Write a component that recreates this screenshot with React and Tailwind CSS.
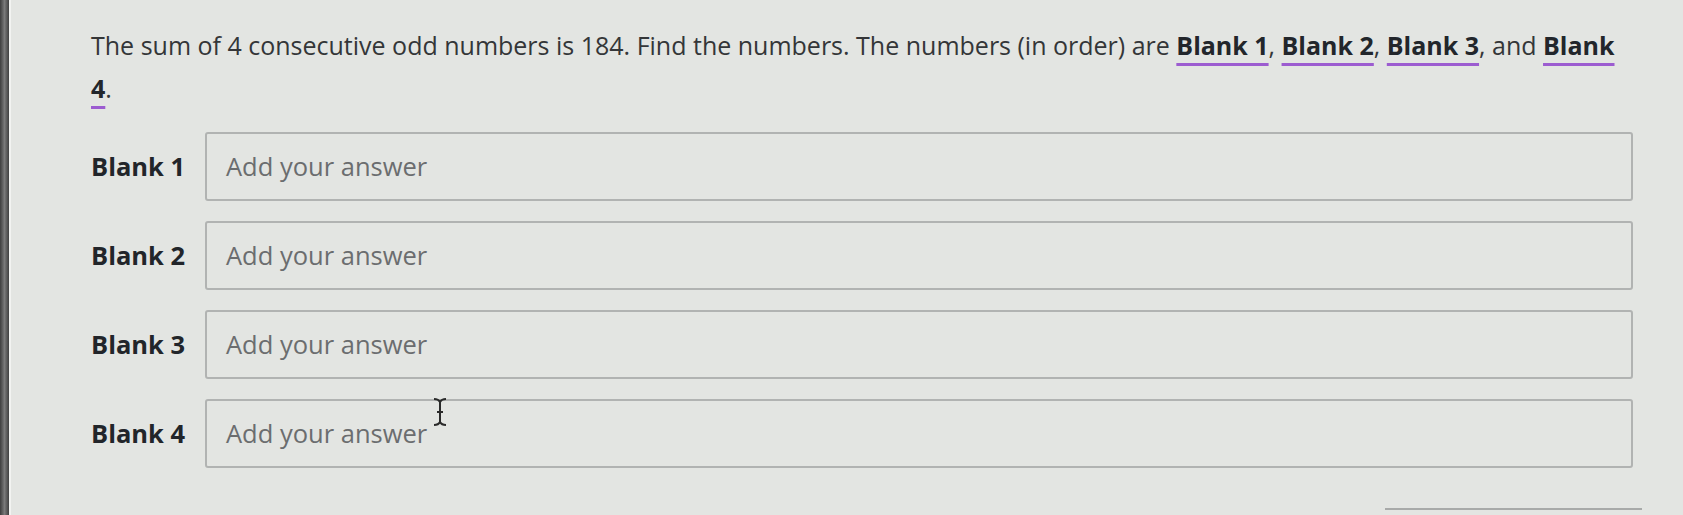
export default function App() {
  const blanks = ["Blank 1", "Blank 2", "Blank 3", "Blank 4"];
  const ref = "font-bold text-[#22262b] underline decoration-[#9c5cd0] decoration-[3px] underline-offset-[8px]";

  return (
    <div
      className="relative flex h-[515px] w-[1683px] overflow-hidden bg-[#e3e5e2]"
      style={{ fontFamily: '"Open Sans", "Noto Sans", sans-serif' }}
    >
      {/* dark edge of the window */}
      <div className="w-[9px] shrink-0 bg-gradient-to-r from-[#3e3e3e] via-[#7a7a7a] to-[#404040]" />
      <div className="w-[2px] shrink-0 bg-[#f2f3f1]" />

      <div className="flex flex-1 flex-col pl-[80px] pr-[50px] pt-[24px]">
        <p className="text-[25px] leading-[43px] text-[#343638]">
          The sum of 4 consecutive odd numbers is 184. Find the numbers. The numbers (in order) are{" "}
          <span className={ref}>Blank 1</span>, <span className={ref}>Blank 2</span>,{" "}
          <span className={ref}>Blank 3</span>, and <span className={ref}>Blank 4</span>.
        </p>

        <div className="mt-[22px] flex flex-col gap-[20px]">
          {blanks.map((b) => (
            <div key={b} className="flex items-center">
              <span className="w-[114px] shrink-0 text-[25.5px] font-bold text-[#22252a]">{b}</span>
              <div className="flex h-[69px] flex-1 items-center rounded-[3px] border-2 border-[#b1b3b2] px-[19px] text-[25.5px] text-[#6b6d6f]">
                Add your answer
              </div>
            </div>
          ))}
        </div>

        <div className="mt-[40px] ml-[1294px] -mr-[9px] h-[2px] bg-[#a8aaa9]" />
      </div>

      {/* text cursor */}
      <svg className="absolute left-[430px] top-[397px]" width="20" height="30" viewBox="0 0 20 30" fill="none" stroke="#2a2a2a" strokeWidth="2">
        <path d="M4 2 C7 2 9 3 10 5 C11 3 13 2 16 2" />
        <path d="M10 5 L10 25" />
        <path d="M7 15 L13 15" />
        <path d="M4 28 C7 28 9 27 10 25 C11 27 13 28 16 28" />
      </svg>
    </div>
  );
}
